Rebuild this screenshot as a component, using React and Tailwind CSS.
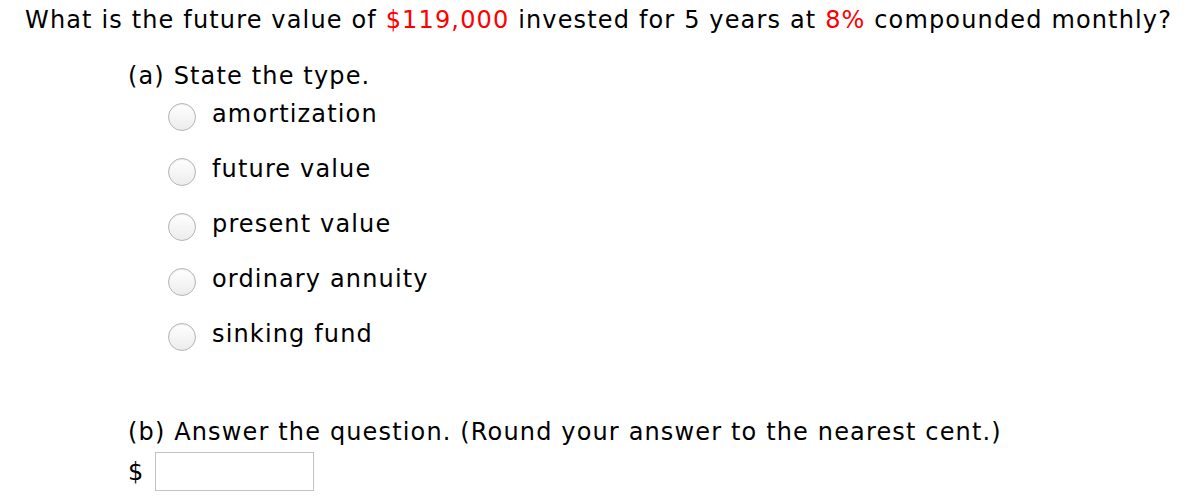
export default function App() {
  const options = ["amortization", "future value", "present value", "ordinary annuity", "sinking fund"];

  return (
    <div
      className="w-[1200px] h-[500px] bg-white text-black text-[24px] leading-[28px] tracking-[1.15px]"
      style={{ fontFamily: "Verdana, 'DejaVu Sans', sans-serif" }}
    >
      <p className="pt-[6px] pl-[25px] whitespace-nowrap">
        What is the future value of <span className="text-[#ff0000]">$119,000</span> invested for 5 years at{" "}
        <span className="text-[#ff0000]">8%</span> compounded monthly?
      </p>

      <div className="pl-[128px] mt-[28px]">
        <p>(a) State the type.</p>
        <div className="flex flex-col gap-[27px] mt-[13px] pl-[40px]">
          {options.map((o) => (
            <label key={o} className="flex items-center gap-[16px]">
              <span className="w-[28px] h-[28px] rounded-full border border-[#b5b5b5] bg-gradient-to-b from-white to-[#ececec] shadow-[inset_0_1px_1px_rgba(0,0,0,0.08)]" />
              <span className="-mt-[6px]">{o}</span>
            </label>
          ))}
        </div>

        <p className="mt-[67px] whitespace-nowrap">(b) Answer the question. (Round your answer to the nearest cent.)</p>
        <div className="flex items-center gap-[11px] mt-[6px]">
          <span>$</span>
          <input type="text" className="w-[159px] h-[39px] border border-[#c3c3c3] outline-none" />
        </div>
      </div>
    </div>
  );
}
